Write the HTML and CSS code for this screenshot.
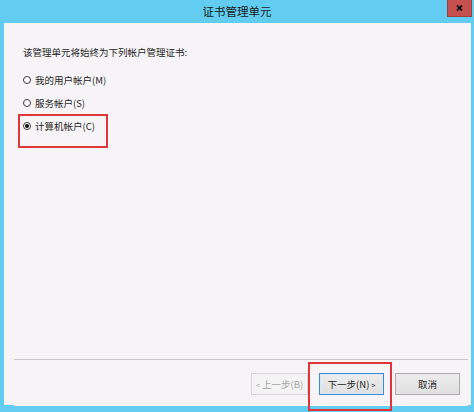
FILE: index.html
```html
<!DOCTYPE html>
<html lang="zh-CN">
<head>
    <meta charset="UTF-8">
    <title>证书管理单元</title>
    <link rel="stylesheet" href="styles.css">
</head>
<body>
    <div class="window">
        <div class="titlebar">
            <div></div>
            <div class="title">证书管理单元</div>
            <div class="close-btn">
                <svg width="25" height="17" viewBox="0 0 25 17">
                    <rect x="0" y="0" width="25" height="17" fill="#c64f4f"/>
                    <path d="M0.5 0 V16.5 H24.5 V0" fill="none" stroke="#9c3f3f"/>
                    <path d="M10 5.5 L15 10.5 M15 5.5 L10 10.5" stroke="#161616" stroke-width="1.8"/>
                </svg>
            </div>
        </div>
        <div class="content">
            <div class="main">
                <p class="prompt">该管理单元将始终为下列帐户管理证书:</p>
                <div class="options">
                    <label class="option"><span class="radio"></span>我的用户帐户(M)</label>
                    <label class="option"><span class="radio"></span>服务帐户(S)</label>
                    <label class="option"><span class="radio checked"></span>计算机帐户(C)</label>
                </div>
                <!-- 标注框 -->
                <div class="mark mark-option"></div>
            </div>
            <div class="footer">
                <button class="btn disabled"><span class="arrow">&lt;</span> 上一步(B)</button>
                <button class="btn default">下一步(N) <span class="arrow">&gt;</span></button>
                <button class="btn">取消</button>
                <div class="mark mark-next"></div>
            </div>
        </div>
    </div>
</body>
</html>
```

FILE: styles.css
```css
html, body {
    margin: 0;
    padding: 0;
}
body {
    font-family: "Noto Sans CJK SC", "Noto Sans", sans-serif;
    color: #1e1e1e;
}
.window {
    width: 474px;
    height: 412px;
    background-color: #62cdf0;
    display: flex;
    flex-direction: column;
    box-sizing: border-box;
}
.titlebar {
    height: 23px;
    display: flex;
    justify-content: center;
    position: relative;
}
.title {
    font-size: 11.5px;
    line-height: 23px;
    color: #1a1a1a;
}
/* 关闭按钮压在标题栏右上角 */
.close-btn {
    position: absolute;
    top: 0;
    right: 2px;
    width: 25px;
    height: 17px;
    background-color: #c64f4f;
}
.close-btn svg {
    display: block;
}
.content {
    flex: 1;
    margin: 0 3px 7px 4px;
    background-color: #f7f4f7;
    display: flex;
    flex-direction: column;
}
.main {
    flex: 1;
    position: relative;
    padding: 23px 0 0 19px;
    font-size: 9.5px;
    line-height: 12px;
}
.prompt {
    margin: 0;
}
.options {
    margin-top: 16px;
    display: flex;
    flex-direction: column;
    gap: 11px;
}
.option {
    display: flex;
    align-items: center;
    gap: 4px;
}
.radio {
    width: 8px;
    height: 8px;
    box-sizing: border-box;
    border: 1px solid #3a3a3a;
    border-radius: 50%;
    background-color: #fff;
    display: flex;
    align-items: center;
    justify-content: center;
}
.radio.checked::after {
    content: "";
    width: 4px;
    height: 4px;
    border-radius: 50%;
    background-color: #111;
}
.footer {
    position: relative;
    margin: 0 3px 0 10px;
    border-top: 1px solid #c9c7cb;
    box-shadow: 0 1px 0 #fff;
    padding: 13px 8px 10px 0;
    display: flex;
    justify-content: flex-end;
    gap: 11px;
}
.btn {
    height: 22px;
    width: 65px;
    padding: 0;
    box-sizing: border-box;
    font-family: inherit;
    font-size: 9.5px;
    color: #1e1e1e;
    background: linear-gradient(#ececec, #e0e0e0);
    border: 1px solid #acacac;
}
.btn.default {
    border-color: #3c8bd0;
    box-shadow: inset 0 0 0 1px #d8e8f6;
}
.btn.disabled {
    width: 57px;
    color: #a6a6a6;
    background: #f4f4f4;
    border-color: #d5d5d5;
}
.arrow {
    font-size: 7px;
}
.mark {
    position: absolute;
    border: 2px solid #e0363a;
    box-sizing: border-box;
}
.mark-option {
    left: 14px;
    top: 91px;
    width: 90px;
    height: 34px;
}
.mark-next {
    left: 294px;
    top: 2px;
    width: 84px;
    height: 49px;
}
```
